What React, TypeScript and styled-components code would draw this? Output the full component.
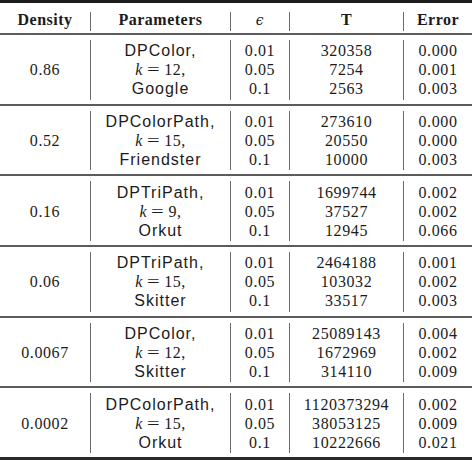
import React from "react";
import styled, { createGlobalStyle } from "styled-components";

const GlobalStyle = createGlobalStyle`
  html, body {
    margin: 0;
    padding: 0;
    background: #ffffff;
  }
`;

const COLS = "90px 140px 59px 114px 69px";
const SERIF = `"Liberation Serif", "Times New Roman", serif`;

const Table = styled.div`
  width: 472px;
  border-top: 3px solid #1c1c1c;
  border-bottom: 3px solid #2a2a2a;
  color: #1b1b1b;
  font-family: ${SERIF};
  font-size: 16px;
`;

const HeaderRow = styled.div`
  display: grid;
  grid-template-columns: ${COLS};
  height: 32px;
  box-sizing: border-box;
  padding: 9px 0 5px;
  border-bottom: 2px solid #5c5c5c;
`;

const Row = styled.div<{ $last?: boolean }>`
  display: grid;
  grid-template-columns: ${COLS};
  height: ${(p) => (p.$last ? "68.67px" : "70.67px")};
  box-sizing: border-box;
  padding: 5px 0 4px;
  border-bottom: ${(p) => (p.$last ? "none" : "2px solid #5c5c5c")};
`;

const Cell = styled.div<{ $divider?: boolean }>`
  display: flex;
  flex-direction: column;
  align-items: center;
  justify-content: center;
  border-left: ${(p) => (p.$divider ? "1px solid #6a6a6a" : "none")};
  font-family: ${SERIF};
  line-height: 19px;
  letter-spacing: 0.6px;
  white-space: nowrap;
`;

const HeadCell = styled(Cell)`
  font-weight: bold;
  letter-spacing: 0.5px;
  padding-bottom: 3px;
  line-height: 16px;
`;

const Epsilon = styled.span`
  font-style: italic;
  font-weight: normal;
  font-family: "DejaVu Serif", "Liberation Serif", serif;
  font-size: 14px;
`;

const SansLine = styled.span`
  font-family: "Liberation Sans", Arial, sans-serif;
  letter-spacing: 1px;
`;

const MathLine = styled.span`
  display: flex;
  align-items: baseline;
  letter-spacing: 0.5px;
`;

const MathVar = styled.span`
  font-style: italic;
`;

const MathOp = styled.span`
  margin: 0 6px;
  display: inline-block;
  transform: scaleX(1.4);
`;

type Entry = {
  density: string;
  algo: string;
  k: number;
  graph: string;
  eps: string[];
  t: string[];
  err: string[];
};

const EPS = ["0.01", "0.05", "0.1"];

const data: Entry[] = [
  { density: "0.86", algo: "DPColor", k: 12, graph: "Google", eps: EPS, t: ["320358", "7254", "2563"], err: ["0.000", "0.001", "0.003"] },
  { density: "0.52", algo: "DPColorPath", k: 15, graph: "Friendster", eps: EPS, t: ["273610", "20550", "10000"], err: ["0.000", "0.000", "0.003"] },
  { density: "0.16", algo: "DPTriPath", k: 9, graph: "Orkut", eps: EPS, t: ["1699744", "37527", "12945"], err: ["0.002", "0.002", "0.066"] },
  { density: "0.06", algo: "DPTriPath", k: 15, graph: "Skitter", eps: EPS, t: ["2464188", "103032", "33517"], err: ["0.001", "0.002", "0.003"] },
  { density: "0.0067", algo: "DPColor", k: 12, graph: "Skitter", eps: EPS, t: ["25089143", "1672969", "314110"], err: ["0.004", "0.002", "0.009"] },
  { density: "0.0002", algo: "DPColorPath", k: 15, graph: "Orkut", eps: EPS, t: ["1120373294", "38053125", "10222666"], err: ["0.002", "0.009", "0.021"] },
];

function Lines({ items }: { items: string[] }) {
  return (
    <>
      {items.map((v, i) => (
        <span key={i}>{v}</span>
      ))}
    </>
  );
}

export default function App() {
  return (
    <>
      <GlobalStyle />
      <Table>
        <HeaderRow>
          <HeadCell>Density</HeadCell>
          <HeadCell $divider>Parameters</HeadCell>
          <HeadCell $divider>
            <Epsilon>ϵ</Epsilon>
          </HeadCell>
          <HeadCell $divider>T</HeadCell>
          <HeadCell $divider>Error</HeadCell>
        </HeaderRow>
        {data.map((r, i) => (
          <Row key={i} $last={i === data.length - 1}>
            <Cell>{r.density}</Cell>
            <Cell $divider>
              <SansLine>{r.algo},</SansLine>
              <MathLine>
                <MathVar>k</MathVar>
                <MathOp>=</MathOp>
                <span>{r.k},</span>
              </MathLine>
              <SansLine>{r.graph}</SansLine>
            </Cell>
            <Cell $divider>
              <Lines items={r.eps} />
            </Cell>
            <Cell $divider>
              <Lines items={r.t} />
            </Cell>
            <Cell $divider>
              <Lines items={r.err} />
            </Cell>
          </Row>
        ))}
      </Table>
    </>
  );
}
